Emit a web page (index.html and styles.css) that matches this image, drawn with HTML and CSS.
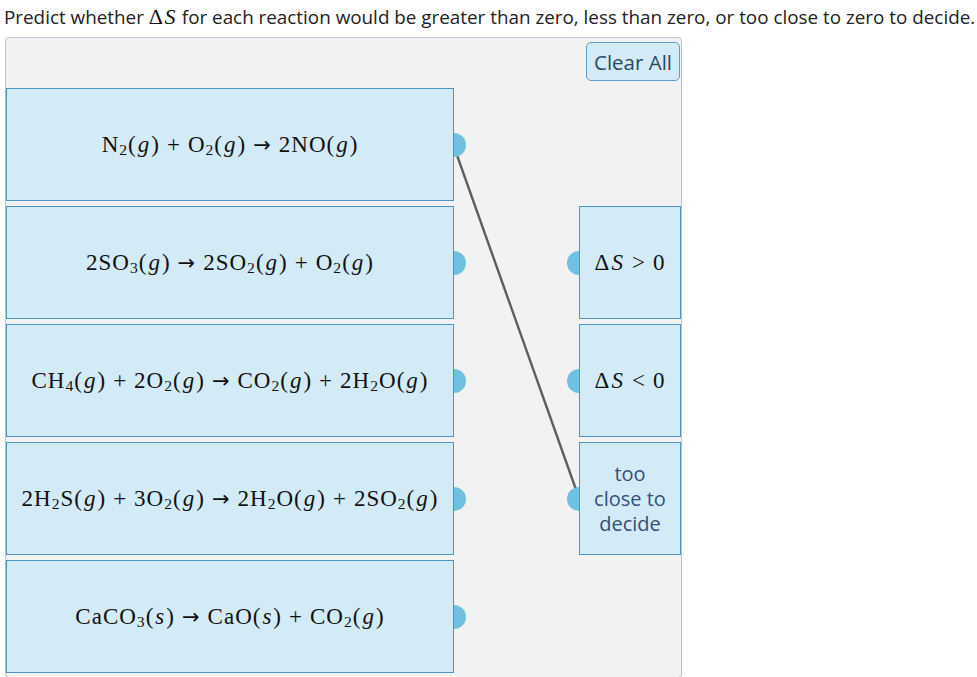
FILE: index.html
```html
<!DOCTYPE html>
<html lang="en">
<head>
    <meta charset="UTF-8">
    <title>Entropy change matching</title>
    <link rel="stylesheet" href="styles.css">
</head>
<body>
    <p class="prompt">Predict whether <span class="math">&Delta;<i>S</i></span> for each reaction would be greater than zero, less than zero, or too close to zero to decide.</p>

    <div class="board">
        <!-- connection drawn between matched items -->
        <svg class="links" width="675" height="639">
            <line x1="447" y1="106" x2="573" y2="460" stroke="#5e5e5e" stroke-width="2.4"/>
        </svg>

        <div class="board-head">
            <button class="clear-btn">Clear All</button>
        </div>

        <div class="match-grid">
            <div class="card source r1"><span class="math">N<sub>2</sub>(<i>g</i>)<span class="bin">+</span>O<sub>2</sub>(<i>g</i>)<span class="rel arrow">&rarr;</span>2NO(<i>g</i>)</span></div>
            <div class="card source r2"><span class="math">2SO<sub>3</sub>(<i>g</i>)<span class="rel arrow">&rarr;</span>2SO<sub>2</sub>(<i>g</i>)<span class="bin">+</span>O<sub>2</sub>(<i>g</i>)</span></div>
            <div class="card source r3"><span class="math">CH<sub>4</sub>(<i>g</i>)<span class="bin">+</span>2O<sub>2</sub>(<i>g</i>)<span class="rel arrow">&rarr;</span>CO<sub>2</sub>(<i>g</i>)<span class="bin">+</span>2H<sub>2</sub>O(<i>g</i>)</span></div>
            <div class="card source r4"><span class="math">2H<sub>2</sub>S(<i>g</i>)<span class="bin">+</span>3O<sub>2</sub>(<i>g</i>)<span class="rel arrow">&rarr;</span>2H<sub>2</sub>O(<i>g</i>)<span class="bin">+</span>2SO<sub>2</sub>(<i>g</i>)</span></div>
            <div class="card source r5"><span class="math">CaCO<sub>3</sub>(<i>s</i>)<span class="rel arrow">&rarr;</span>CaO(<i>s</i>)<span class="bin">+</span>CO<sub>2</sub>(<i>g</i>)</span></div>

            <div class="card target r2"><span class="math">&Delta;<i>S</i><span class="rel">&gt;</span>0</span></div>
            <div class="card target r3"><span class="math">&Delta;<i>S</i><span class="rel">&lt;</span>0</span></div>
            <div class="card target r4 label"><span>too close to decide</span></div>
        </div>
    </div>
</body>
</html>
```

FILE: styles.css
```css
* {
    box-sizing: border-box;
}

body {
    margin: 0;
    padding: 0 4px;
    font-family: "Open Sans", "Liberation Sans", sans-serif;
    color: #222;
    background: #fff;
}

.prompt {
    margin: 0;
    padding-top: 3px;
    font-size: 18.85px;
    line-height: 28px;
    white-space: nowrap;
}

.prompt .math {
    font-size: 22px;
    letter-spacing: 0.5px;
}

/* math text */
.math {
    font-family: "Liberation Serif", "DejaVu Serif", serif;
    font-size: 23px;
    letter-spacing: 1px;
    color: #111;
    white-space: nowrap;
}

.math i {
    padding: 0 1px;
}

.math sub {
    font-size: 0.68em;
    vertical-align: -0.22em;
    line-height: 0;
}

.math .bin {
    padding: 0 7px;
}

.math .rel {
    padding: 0 7px;
}

.math .arrow {
    font-family: "DejaVu Sans", sans-serif;
    font-size: 21px;
}

/* board */
.board {
    position: relative;
    margin-top: 6px;
    margin-left: 1px;
    width: 677px;
    height: 641px;
    background: #f2f2f2;
    border: 1px solid #b9c3d0;
    border-radius: 4px;
    padding: 4px 1px 0 0;
}

.links {
    position: absolute;
    left: 0;
    top: 0;
}

.board-head {
    display: flex;
    justify-content: flex-end;
    height: 39px;
}

.clear-btn {
    height: 39px;
    width: 94px;
    padding: 0;
    font-family: "Open Sans", "Liberation Sans", sans-serif;
    font-size: 20.5px;
    color: #2b4866;
    background: #d4eaf7;
    border: 1px solid #5d9dc8;
    border-radius: 5px;
}

.match-grid {
    display: grid;
    grid-template-columns: 448px 1fr 102px;
    grid-template-rows: repeat(5, 113px);
    row-gap: 5px;
    margin-top: 7px;
    margin-right: -1px;
}

.card {
    position: relative;
    display: flex;
    align-items: center;
    justify-content: center;
    background: #d3eaf7;
    border: 1px solid #4d95c5;
}

.source { grid-column: 1; }
.target { grid-column: 3; }

.r1 { grid-row: 1; }
.r2 { grid-row: 2; }
.r3 { grid-row: 3; }
.r4 { grid-row: 4; }
.r5 { grid-row: 5; }

/* connector handles */
.source::after,
.target::before {
    content: "";
    position: absolute;
    top: 50%;
    width: 12px;
    height: 24px;
    margin-top: -12px;
    background: #6fc1e2;
}

.source::after {
    right: -13px;
    border-radius: 0 12px 12px 0;
}

.target::before {
    left: -13px;
    border-radius: 12px 0 0 12px;
}

.label {
    text-align: center;
    font-size: 20px;
    line-height: 25px;
    color: #34507a;
}

.label span {
    max-width: 78px;
}
```
